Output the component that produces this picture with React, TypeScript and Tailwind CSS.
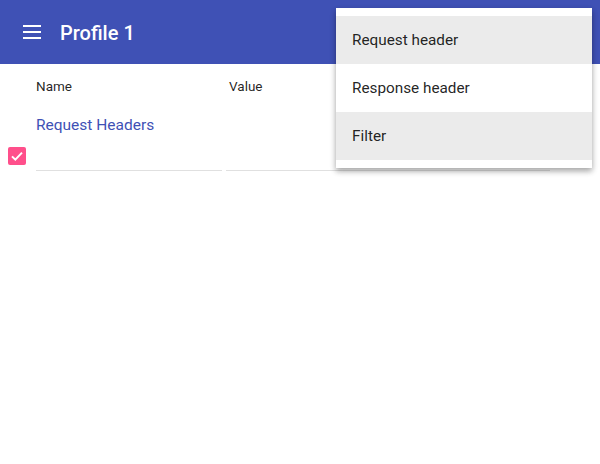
import clsx from "clsx";

const font = { fontFamily: "Roboto, 'Liberation Sans', sans-serif" };

export default function App() {
    return (
        <div className="relative h-[464px] w-[600px] overflow-hidden bg-white" style={font}>
            <header className="flex h-16 items-center bg-[#3f51b5] text-white">
                <div className="ml-[23px] flex h-[14px] w-[18px] flex-col justify-between">
                    <span className="block h-[2px] w-full bg-white" />
                    <span className="block h-[2px] w-full bg-white" />
                    <span className="block h-[2px] w-full bg-white" />
                </div>
                <h1 className="ml-[19px] pt-[2px] text-[20px] font-medium">Profile 1</h1>
            </header>

            <div className="flex h-[45px] items-center pl-9 text-[13.5px] text-black/[0.87]">
                <div className="w-[193px]">Name</div>
                <div>Value</div>
            </div>

            <div className="mt-[5px] pl-9 text-[15.5px] text-[#3f51b5]">Request Headers</div>

            <div className="mt-[10px] flex items-end">
                <div className="mb-[6px] ml-2 flex h-[18px] w-[18px] items-center justify-center rounded-[2px] bg-[#ff4f8b]">
                    <svg width="16" height="16" viewBox="0 0 24 24" fill="none" stroke="white" strokeWidth="3">
                        <path d="M4.5 12.5 L9.5 17.5 L19.5 7" />
                    </svg>
                </div>
                <div className="ml-[10px] h-6 w-[186px] border-b border-[#e0e0e0]" />
                <div className="ml-1 h-6 w-[324px] border-b border-[#e0e0e0]" />
            </div>

            <div className="absolute right-2 top-2 w-64 bg-white py-2 shadow-[0_3px_6px_rgba(0,0,0,0.16),0_3px_6px_rgba(0,0,0,0.23)]">
                <MenuItem active label="Request header" />
                <MenuItem label="Response header" />
                <MenuItem active label="Filter" />
            </div>
        </div>
    );
}

function MenuItem({ label, active }: { label: string; active?: boolean }) {
    return (
        <div
            className={clsx(
                "flex h-12 items-center px-4 text-[15.3px] text-black/[0.87]",
                active && "bg-[#ebebeb]"
            )}
        >
            {label}
        </div>
    );
}
